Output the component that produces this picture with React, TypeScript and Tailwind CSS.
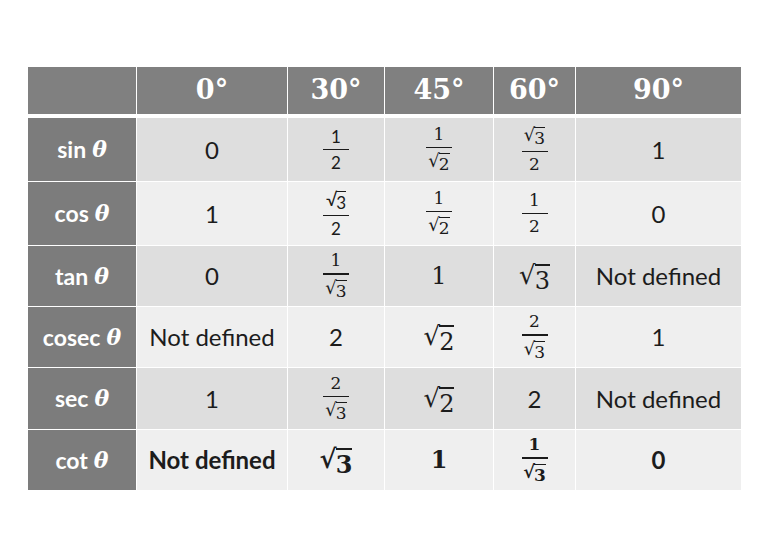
import type { ReactNode } from 'react'

const cols = 'grid grid-cols-[108px_150px_96px_108px_81px_165px] gap-x-px'

const sans = 'font-["Lato","Liberation_Sans",sans-serif]'
const serif = 'font-["DejaVu_Serif","Liberation_Serif",serif]'

function Sqrt({ n, size = 'md', bold = false }: { n: string; size?: 'sm' | 'md'; bold?: boolean }) {
  if (size === 'sm') {
    return (
      <span className={`inline-flex items-start leading-none ${bold ? 'font-bold' : ''}`}>
        <span className="text-[18px] leading-none -mr-[1px]">√</span>
        <span className="border-t-[1.5px] border-current leading-none pt-[2px] mt-[1px]">{n}</span>
      </span>
    )
  }
  return (
    <span className={`inline-flex items-start leading-none ${bold ? 'font-bold' : ''}`}>
      <span className="text-[26px] leading-none -mr-[1px]">√</span>
      <span className="border-t-2 border-current leading-none pt-[3px] mt-[2px]">{n}</span>
    </span>
  )
}

function Frac({ num, den, font = serif, bold = false }: { num: ReactNode; den: ReactNode; font?: string; bold?: boolean }) {
  return (
    <div className={`${font} ${bold ? 'font-semibold' : ''} flex flex-col items-center text-[17px] leading-none text-[#1a1a1a]`}>
      <span className="pb-[4px]">{num}</span>
      <span className="w-[26px] h-[1.5px] bg-[#1a1a1a]" />
      <span className="pt-[4px]">{den}</span>
    </div>
  )
}

type Row = { label: string; bg: string; h: string; cells: ReactNode[] }

const text = (v: string, bold = false) => (
  <span className={`${sans} text-[24px] ${bold ? 'font-bold' : ''}`}>{v}</span>
)
const big = (v: ReactNode, bold = false) => (
  <span className={`${serif} text-[24px] ${bold ? 'font-bold' : ''}`}>{v}</span>
)

const rows: Row[] = [
  {
    label: 'sin',
    bg: 'bg-[#dedede]',
    h: 'h-[63px]',
    cells: [
      text('0'),
      <Frac num="1" den="2" font={sans} />,
      <Frac num="1" den={<Sqrt n="2" size="sm" />} />,
      <Frac num={<Sqrt n="3" size="sm" />} den="2" />,
      text('1'),
    ],
  },
  {
    label: 'cos',
    bg: 'bg-[#efefef]',
    h: 'h-[63px]',
    cells: [
      text('1'),
      <Frac num={<Sqrt n="3" size="sm" />} den="2" font={sans} />,
      <Frac num="1" den={<Sqrt n="2" size="sm" />} />,
      <Frac num="1" den="2" />,
      text('0'),
    ],
  },
  {
    label: 'tan',
    bg: 'bg-[#dedede]',
    h: 'h-[60px]',
    cells: [
      text('0'),
      <Frac num="1" den={<Sqrt n="3" size="sm" />} />,
      big('1'),
      big(<Sqrt n="3" />),
      text('Not defined'),
    ],
  },
  {
    label: 'cosec',
    bg: 'bg-[#efefef]',
    h: 'h-[60px]',
    cells: [
      text('Not defined'),
      text('2'),
      big(<Sqrt n="2" />),
      <Frac num="2" den={<Sqrt n="3" size="sm" />} />,
      text('1'),
    ],
  },
  {
    label: 'sec',
    bg: 'bg-[#dedede]',
    h: 'h-[61px]',
    cells: [
      text('1'),
      <Frac num="2" den={<Sqrt n="3" size="sm" />} />,
      big(<Sqrt n="2" />),
      text('2'),
      text('Not defined'),
    ],
  },
  {
    label: 'cot',
    bg: 'bg-[#efefef]',
    h: 'h-[60px]',
    cells: [
      text('Not defined', true),
      big(<Sqrt n="3" bold />, true),
      big('1', true),
      <Frac num="1" den={<Sqrt n="3" size="sm" />} bold />,
      text('0', true),
    ],
  },
]

const angles = ['0°', '30°', '45°', '60°', '90°']

export default function App() {
  return (
    <div className="min-h-screen bg-white pt-[67px] pl-[28px] text-[#1c1c1c]">
      <div className="w-[713px]">
        {/* Header */}
        <div className={`${cols} h-[47px]`}>
          <div className="bg-[#808080]" />
          {angles.map((a) => (
            <div
              key={a}
              className={`bg-[#808080] flex items-center justify-center text-white font-bold text-[27px] ${serif}`}
            >
              {a}
            </div>
          ))}
        </div>

        {/* Body */}
        <div className="flex flex-col gap-y-px mt-[4px]">
          {rows.map((r) => (
            <div key={r.label} className={`${cols} ${r.h}`}>
              <div className="bg-[#7c7c7c] flex items-center justify-center text-white font-bold text-[23px]">
                <span className={sans}>{r.label}</span>
                <span className={`${serif} italic ml-[6px] text-[22px]`}>θ</span>
              </div>
              {r.cells.map((c, i) => (
                <div key={i} className={`${r.bg} flex items-center justify-center`}>
                  {c}
                </div>
              ))}
            </div>
          ))}
        </div>
      </div>
    </div>
  )
}
